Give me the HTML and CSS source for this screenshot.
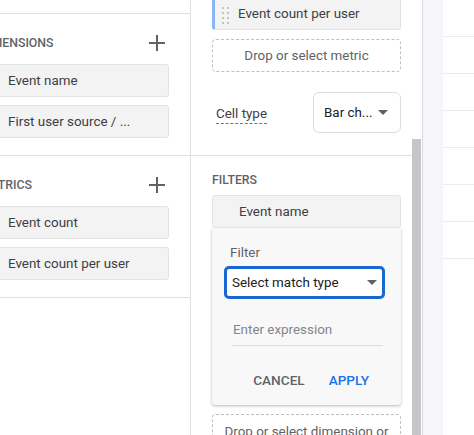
FILE: index.html
```html
<!DOCTYPE html>
<html lang="en">
<head>
    <meta charset="UTF-8">
    <meta name="viewport" content="width=device-width, initial-scale=1.0">
    <title>Exploration - Variables and Settings</title>
    <link rel="stylesheet" href="styles.css">
</head>
<body>
    <div class="variables">
        <div class="top-gap"></div>

        <div class="section">
            <div class="section-head">
                <span class="section-title">Dimensions</span>
                <span class="plus"></span>
            </div>
            <div class="chip">Event name</div>
            <div class="chip">First user source / ...</div>
        </div>

        <div class="section">
            <div class="section-head">
                <span class="section-title">Metrics</span>
                <span class="plus"></span>
            </div>
            <div class="chip">Event count</div>
            <div class="chip">Event count per user</div>
        </div>
    </div>

    <div class="settings">
        <div class="settings-block">
            <div class="chip chip-drag active">
                <span class="handle"><i></i><i></i><i></i><i></i><i></i><i></i><i></i><i></i></span>
                Event count per user
            </div>
            <div class="drop">Drop or select metric</div>
            <div class="cell-row">
                <span class="hint">Cell type</span>
                <div class="select">
                    <span>Bar ch...</span>
                    <span class="caret"></span>
                </div>
            </div>
        </div>

        <div class="filters">
            <div class="filters-title">Filters</div>
            <div class="chip chip-drag">Event name</div>
            <div class="popup">
                <div class="popup-label">Filter</div>
                <div class="match-select">
                    <span>Select match type</span>
                    <span class="caret"></span>
                </div>
                <div class="expression">Enter expression</div>
                <div class="actions">
                    <button class="btn">Cancel</button>
                    <button class="btn primary">Apply</button>
                </div>
            </div>
            <div class="drop drop-tall">Drop or select dimension or metric</div>
        </div>

        <div class="scroll-thumb"></div>
    </div>

    <div class="rail"></div>

    <div class="table">
        <div class="row"></div>
        <div class="row"></div>
        <div class="row"></div>
        <div class="row"></div>
        <div class="row"></div>
        <div class="row"></div>
        <div class="row"></div>
    </div>
</body>
</html>
```

FILE: styles.css
```css
* {
    box-sizing: border-box;
}
body {
    margin: 0;
    height: 435px;
    overflow: hidden;
    display: flex;
    font-family: Roboto, "Liberation Sans", sans-serif;
    font-size: 13.4px;
    color: #3c4043;
    background: #fff;
}

/* left column (scrolled a bit to the left) */
.variables {
    flex: none;
    width: 231px;
    margin-left: -40px;
    border-right: 1px solid #e0e0e0;
}
.top-gap {
    height: 14px;
    border-bottom: 1px solid #e0e0e0;
}
.section {
    padding: 19px 21px 17px 21px;
    border-bottom: 1px solid #e0e0e0;
}
.section-head {
    display: flex;
    align-items: center;
    justify-content: space-between;
    height: 20px;
    margin-bottom: 11px;
}
.section-title,
.filters-title {
    font-size: 12.3px;
    font-weight: 500;
    text-transform: uppercase;
    color: #5f6368;
}
.section-title {
    margin-left: -1px;
}
.plus {
    position: relative;
    width: 16px;
    height: 16px;
    margin-right: 4px;
}
.plus::before,
.plus::after {
    content: "";
    position: absolute;
    background: #5f6368;
}
.plus::before {
    left: 0;
    right: 0;
    top: 7px;
    height: 2px;
}
.plus::after {
    top: 0;
    bottom: 0;
    left: 7px;
    width: 2px;
}

.chip {
    display: flex;
    align-items: center;
    height: 33px;
    padding-left: 26px;
    background: #f3f3f3;
    border: 1px solid #e3e3e3;
    border-radius: 3px;
    color: #3c4043;
    white-space: nowrap;
}
.chip + .chip {
    margin-top: 8px;
}

/* middle column */
.settings {
    flex: none;
    position: relative;
    width: 232px;
    border-right: 1px solid #dadce0;
}
.settings-block {
    margin-top: -3px;
    padding: 0 21px 22px 21px;
    border-bottom: 1px solid #e0e0e0;
}
.chip-drag {
    position: relative;
}
.chip.active {
    border-left: 3px solid #8ab4f8;
    padding-left: 23px;
}
.handle {
    position: absolute;
    left: 7px;
    top: 9px;
    display: grid;
    grid-template-columns: 2px 2px;
    column-gap: 3px;
    row-gap: 3px;
}
.handle i {
    display: block;
    width: 2px;
    height: 2px;
    background: #c4c4c4;
}
.drop {
    display: flex;
    align-items: center;
    justify-content: center;
    height: 33px;
    margin-top: 9px;
    border: 1px dashed #bdc1c6;
    border-radius: 4px;
    color: #5f6368;
    text-align: center;
}
.drop-tall {
    height: 50px;
    align-items: flex-start;
    padding: 7px 6px 0;
    line-height: 20px;
}
.cell-row {
    display: flex;
    align-items: center;
    justify-content: space-between;
    margin-top: 20px;
    padding-left: 4px;
}
.hint {
    color: #3c4043;
    line-height: 18px;
    border-bottom: 1px dashed #70757a;
    margin-top: 3px;
}
.select {
    display: flex;
    align-items: center;
    justify-content: space-between;
    width: 88px;
    height: 41px;
    padding: 0 12px 0 10px;
    border: 1px solid #dadce0;
    border-radius: 6px;
    color: #202124;
}
.caret {
    width: 0;
    height: 0;
    border-left: 5px solid transparent;
    border-right: 5px solid transparent;
    border-top: 5px solid #5f6368;
}

.filters {
    padding: 14px 21px 0 21px;
}
.filters-title {
    height: 20px;
    line-height: 20px;
    margin-bottom: 5px;
}
.popup {
    height: 177px;
    padding: 15px 24px 0 12px;
    background: #f8f8f8;
    border-radius: 0 0 3px 3px;
    box-shadow: 0 1px 3px rgba(0, 0, 0, 0.28);
}
.popup-label {
    padding-left: 6px;
    line-height: 20px;
    color: #5f6368;
}
.match-select {
    display: flex;
    align-items: center;
    justify-content: space-between;
    width: 161px;
    height: 33px;
    margin-top: 3px;
    padding: 0 5px 0 5px;
    border: 3px solid #1967d2;
    border-radius: 5px;
    background: #fff;
    color: #202124;
}
.expression {
    width: 151px;
    height: 31px;
    margin: 16px 0 0 8px;
    padding: 7px 0 0 1px;
    border-bottom: 1px solid #dadce0;
    color: #80868b;
}
.actions {
    display: flex;
    justify-content: flex-end;
    gap: 8px;
    margin-top: 16px;
}
.btn {
    height: 36px;
    padding: 0 8px;
    border: none;
    background: none;
    font-family: inherit;
    font-size: 13.6px;
    font-weight: 500;
    text-transform: uppercase;
    color: #5f6368;
}
.btn.primary {
    color: #1a73e8;
}

.scroll-thumb {
    position: absolute;
    top: 139px;
    bottom: 0;
    right: 1px;
    width: 9px;
    background: #c6c6c6;
}

/* right side */
.rail {
    flex: none;
    width: 20px;
    background: #f4f6f9;
}
.table {
    flex: 1;
}
.row {
    height: 37px;
    border-bottom: 1px solid #ebebeb;
}
```
